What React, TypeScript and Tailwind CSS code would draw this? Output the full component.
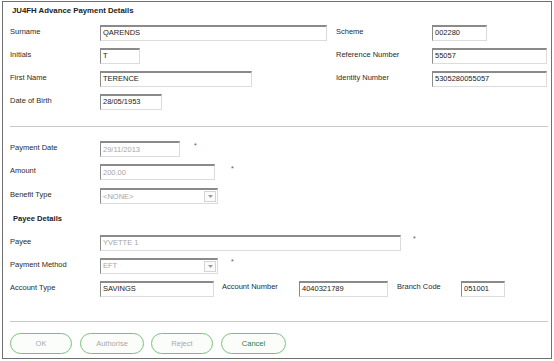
import { type ReactNode } from "react";

const inputBase =
  "h-[16px] flex items-center pl-[2px] bg-white border-l border-r border-b border-t-2 border-t-[#8a8a8a] border-l-[#8a8a8a] border-r-[#dcdcdc] border-b-[#dcdcdc] text-[7.5px] leading-none whitespace-nowrap overflow-hidden";

function Box({
  value,
  width,
  disabled,
}: {
  value: string;
  width: string;
  disabled?: boolean;
}) {
  return (
    <div className={`${inputBase} ${width} ${disabled ? "text-[#a6a6a6]" : "text-[#222]"}`}>
      {value}
    </div>
  );
}

function Select({ value }: { value: string }) {
  return (
    <div className={`${inputBase} w-[118px] justify-between pr-[1px] text-[#a6a6a6]`}>
      <span>{value}</span>
      <span className="w-[12px] h-[11px] border border-[#d4d4d4] bg-[#fafafa] flex items-center justify-center">
        <svg width="5" height="3" viewBox="0 0 5 3">
          <path d="M0 0h5L2.5 3z" fill="#9a9a9a" />
        </svg>
      </span>
    </div>
  );
}

function Row({
  label,
  labelW = "w-[90px]",
  h = "h-[23px]",
  children,
}: {
  label: string;
  labelW?: string;
  h?: string;
  children?: ReactNode;
}) {
  return (
    <div className={`flex items-center ${h}`}>
      <span className={`${labelW} text-[7.5px] text-[#2b2b2b] -mt-[2px]`}>{label}</span>
      {children}
    </div>
  );
}

function Star({ ml }: { ml: string }) {
  return <span className={`${ml} mb-[6px] text-[7px] text-[#555]`}>*</span>;
}

function Btn({ label, width, active }: { label: string; width: string; active?: boolean }) {
  return (
    <button
      type="button"
      className={`${width} h-[21px] rounded-full border-[1.5px] border-[#79c279] bg-[#fbfdfb] text-[7.5px] ${
        active ? "text-[#2f7d32]" : "text-[#a8a8a8]"
      }`}
    >
      {label}
    </button>
  );
}

export default function App() {
  return (
    <div className="w-[554px] h-[361px] bg-white pl-[2px] pt-[1px] font-['Liberation_Sans',Arial,sans-serif]">
      <div className="w-[550px] h-[358px] border border-[#707070] pl-[7px] pr-[3px] flex flex-col">
        <h1 className="ml-[2px] mt-[4px] h-[10px] leading-[10px] text-[7.8px] font-bold text-[#222]">
          JU4FH Advance Payment Details
        </h1>

        <div className="mt-[5px] flex">
          <div className="w-[326px] flex flex-col">
            <Row label="Surname">
              <Box value="QARENDS" width="w-[227px]" />
            </Row>
            <Row label="Initials">
              <Box value="T" width="w-[40px]" />
            </Row>
            <Row label="First Name">
              <Box value="TERENCE" width="w-[152px]" />
            </Row>
            <Row label="Date of Birth">
              <Box value="28/05/1953" width="w-[62px]" />
            </Row>
          </div>
          <div className="flex flex-col">
            <Row label="Scheme" labelW="w-[96px]">
              <Box value="002280" width="w-[55px]" />
            </Row>
            <Row label="Reference Number" labelW="w-[96px]">
              <Box value="55057" width="w-[115px]" />
            </Row>
            <Row label="Identity Number" labelW="w-[96px]">
              <Box value="5305280055057" width="w-[115px]" />
            </Row>
          </div>
        </div>

        <div className="mt-[13px] h-px bg-[#c9c9c9]" />

        <div className="mt-[11px] flex flex-col">
          <Row label="Payment Date" h="h-[22px]">
            <Box value="29/11/2013" width="w-[80px]" disabled />
            <Star ml="ml-[14px]" />
          </Row>
          <Row label="Amount" h="h-[24px]">
            <Box value="200.00" width="w-[115px]" disabled />
            <Star ml="ml-[16px]" />
          </Row>
          <Row label="Benefit Type" h="h-[24px]">
            <Select value="<NONE>" />
          </Row>
          <div className="h-[23px] flex items-center">
            <span className="ml-[3px] text-[7.6px] font-bold text-[#222] -mt-[2px]">Payee Details</span>
          </div>
          <Row label="Payee">
            <Box value="YVETTE 1" width="w-[301px]" disabled />
            <Star ml="ml-[12px]" />
          </Row>
          <Row label="Payment Method">
            <Select value="EFT" />
            <Star ml="ml-[13px]" />
          </Row>
          <Row label="Account Type">
            <Box value="SAVINGS" width="w-[114px]" />
            <span className="ml-[8px] w-[77px] text-[7.5px] text-[#2b2b2b] -mt-[4px]">Account Number</span>
            <Box value="4040321789" width="w-[89px]" />
            <span className="ml-[9px] w-[64px] text-[7.5px] text-[#2b2b2b] -mt-[4px]">Branch Code</span>
            <Box value="051001" width="w-[44px]" />
          </Row>
        </div>

        <div className="mt-[21px] h-px bg-[#c9c9c9]" />

        <div className="mt-[11px] flex">
          <Btn label="OK" width="w-[62px]" />
          <div className="w-[8px]" />
          <Btn label="Authorise" width="w-[64px]" />
          <div className="w-[7px]" />
          <Btn label="Reject" width="w-[62px]" />
          <div className="w-[8px]" />
          <Btn label="Cancel" width="w-[65px]" active />
        </div>
      </div>
    </div>
  );
}
